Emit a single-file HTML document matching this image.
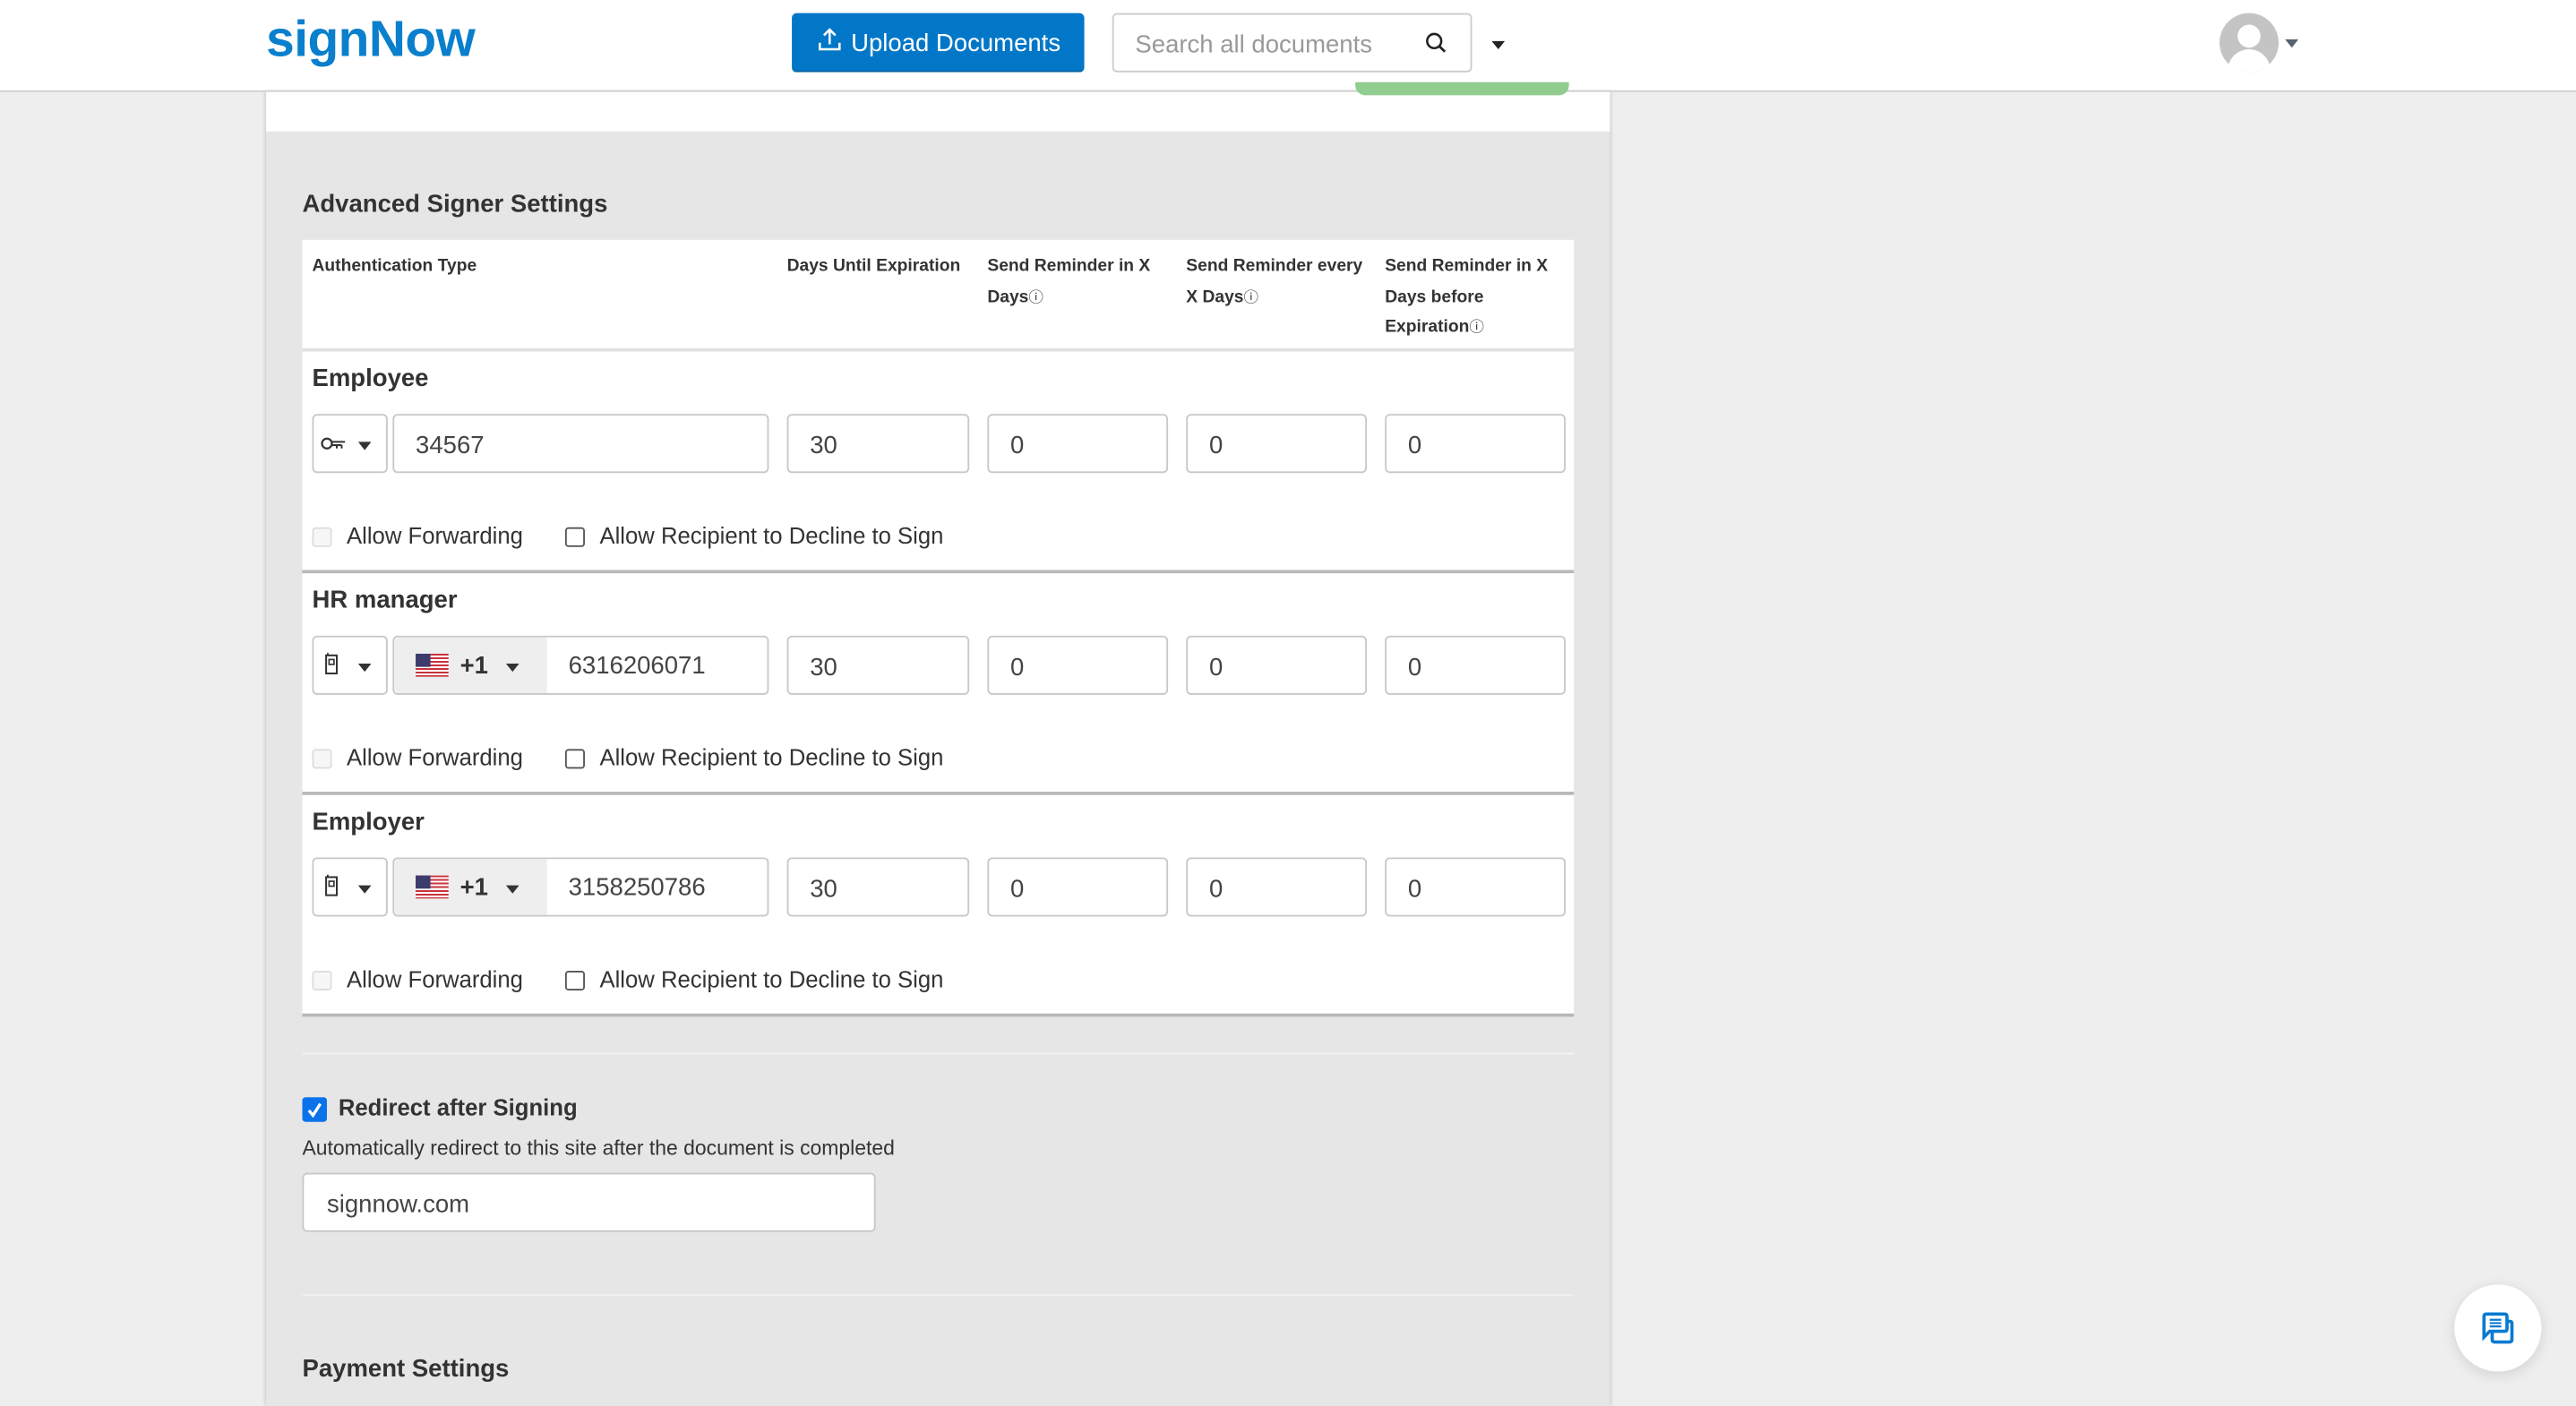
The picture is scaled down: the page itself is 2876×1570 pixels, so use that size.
<!DOCTYPE html>
<html><head><meta charset="utf-8">
<style>
html,body{margin:0;padding:0;width:2876px;height:1570px;overflow:hidden;background:#eeeeee;}
#s{position:absolute;left:0;top:0;width:1568px;height:856px;transform:scale(1.83418);transform-origin:0 0;font-family:"Liberation Sans",sans-serif;color:#333;}
.a{position:absolute;}
.hdr{left:0;top:0;width:1568px;height:55px;background:#fff;border-bottom:1px solid #cfcfcf;}
.panel{left:162px;top:56px;width:818px;height:800px;background:#e6e6e6;box-shadow:1px 0 2px #cfcfcf,-1px 0 2px #cfcfcf;}
.tbl{left:184px;top:146px;width:774px;height:472px;background:#fff;}
.th{font-size:10.5px;font-weight:bold;line-height:18.6px;color:#333;top:153px;}
.lbl{font-size:15px;font-weight:bold;color:#333;}
.inp{border:1px solid #c8c8c8;border-radius:3px;background:#fff;box-sizing:border-box;height:36px;font-size:15px;color:#444;line-height:37px;padding-left:13px;}
.cb{width:12px;height:12px;border-radius:2px;box-sizing:border-box;}
.ck{font-size:14px;color:#333;}
.sep{left:184px;width:774px;height:2px;background:#b8b8b8;}
.car{width:0;height:0;border-left:4px solid transparent;border-right:4px solid transparent;border-top:5px solid #333;}
.flag{width:20px;height:14px;background:repeating-linear-gradient(#c8323c 0 1.1px,#fff 1.1px 2.2px);}
.flag:before{content:"";position:absolute;left:0;top:0;width:9px;height:7.5px;background:#3c3b6e;}
</style></head><body>
<div id="s">
<div class="a hdr"></div>
<div class="a" style="left:162px;top:6px;font-size:31px;font-weight:bold;color:#0a7fcd;letter-spacing:-0.3px;">signNow</div>
<div class="a" style="left:482px;top:8px;width:178px;height:36px;background:#0277c8;border-radius:3px;border-bottom:1px solid #0561a3;box-sizing:border-box;color:#fff;font-size:15px;line-height:37px;padding-left:36px;">Upload Documents</div>
<svg class="a" style="left:497px;top:16px" width="16" height="16" viewBox="0 0 16 16"><path d="M8 11V2M4.5 5.5L8 2l3.5 3.5M2 10v4h12v-4" fill="none" stroke="#fff" stroke-width="1.4"/></svg>
<div class="a" style="left:677px;top:8px;width:219px;height:36px;border:1px solid #ccc;border-radius:3px;box-sizing:border-box;font-size:15px;color:#999;line-height:37px;padding-left:13px;">Search all documents</div>
<svg class="a" style="left:867px;top:19px" width="14" height="14" viewBox="0 0 14 14"><circle cx="6" cy="6" r="4.3" fill="none" stroke="#222" stroke-width="1.4"/><path d="M9 9l3.5 3.5" stroke="#222" stroke-width="1.5"/></svg>
<div class="a car" style="left:908px;top:25px;border-top-color:#222"></div>
<div class="a" style="left:1351px;top:8px;width:36px;height:36px;border-radius:50%;background:#c4c4c4;overflow:hidden;">
<div class="a" style="left:11px;top:7px;width:14px;height:14px;border-radius:50%;background:#fff;"></div>
<div class="a" style="left:5px;top:22px;width:26px;height:26px;border-radius:50%;background:#fff;"></div></div>
<div class="a car" style="left:1391px;top:24px;border-top-color:#56626e"></div>

<div class="a panel"></div>
<div class="a" style="left:162px;top:56px;width:818px;height:24px;background:#fff;"></div>
<div class="a" style="left:825px;top:50px;width:130px;height:8px;background:#90cd8f;border-radius:0 0 6px 6px;"></div>

<div class="a" style="left:184px;top:116px;font-size:15px;font-weight:bold;">Advanced Signer Settings</div>
<div class="a tbl"></div>
<div class="a th" style="left:190px">Authentication Type</div>
<div class="a th" style="left:479px">Days Until Expiration</div>
<div class="a th" style="left:601px;width:110px">Send Reminder in X Days<span style="font-weight:normal;font-size:9px">ⓘ</span></div>
<div class="a th" style="left:722px;width:112px">Send Reminder every X Days<span style="font-weight:normal;font-size:9px">ⓘ</span></div>
<div class="a th" style="left:843px;width:105px">Send Reminder in X Days before Expiration<span style="font-weight:normal;font-size:9px">ⓘ</span></div>
<div class="a" style="left:184px;top:212px;width:774px;height:2px;background:#e2e2e2;"></div>

<div class="a lbl" style="left:190px;top:222px">Employee</div>
<div class="a inp" style="left:190px;top:252px;width:46px;"></div>
<svg class="a" style="left:195px;top:265px" width="16" height="10" viewBox="0 0 16 10"><circle cx="4" cy="5" r="3" fill="none" stroke="#333" stroke-width="1.2"/><path d="M7 4h8M7 6h6M10 6v2M13 6v2" stroke="#333" stroke-width="1.1" fill="none"/></svg>
<div class="a car" style="left:218px;top:269px"></div>
<div class="a inp" style="left:239px;top:252px;width:229px;">34567</div>
<div class="a inp" style="left:479px;top:252px;width:111px;">30</div>
<div class="a inp" style="left:601px;top:252px;width:110px;">0</div>
<div class="a inp" style="left:722px;top:252px;width:110px;">0</div>
<div class="a inp" style="left:843px;top:252px;width:110px;">0</div>
<div class="a cb" style="left:190px;top:321px;border:1px solid #ddd;background:#f7f7f7"></div>
<div class="a ck" style="left:211px;top:318px">Allow Forwarding</div>
<div class="a cb" style="left:344px;top:321px;border:1px solid #555;"></div>
<div class="a ck" style="left:365px;top:318px">Allow Recipient to Decline to Sign</div>
<div class="a sep" style="top:347px"></div>

<div class="a lbl" style="left:190px;top:357px">HR manager</div>
<div class="a inp" style="left:190px;top:387px;width:46px;"></div>
<svg class="a" style="left:197px;top:397px" width="10" height="14" viewBox="0 0 10 14"><rect x="1.5" y="2" width="6.5" height="11" fill="none" stroke="#333" stroke-width="1.1"/><rect x="3.3" y="4.5" width="3" height="3" fill="none" stroke="#333" stroke-width="0.9"/><path d="M2.5 2V0.5" stroke="#333"/></svg>
<div class="a car" style="left:218px;top:404px"></div>
<div class="a inp" style="left:239px;top:387px;width:229px;"></div>
<div class="a" style="left:240px;top:388px;width:93px;height:34px;background:#eeeeee;border-radius:3px 0 0 3px"></div>
<div class="a flag" style="left:253px;top:398px"></div>
<div class="a" style="left:280px;top:397px;font-size:15px;font-weight:bold;color:#333">+1</div>
<div class="a car" style="left:308px;top:404px"></div>
<div class="a" style="left:346px;top:397px;font-size:15px;color:#444">6316206071</div>
<div class="a inp" style="left:479px;top:387px;width:111px;">30</div>
<div class="a inp" style="left:601px;top:387px;width:110px;">0</div>
<div class="a inp" style="left:722px;top:387px;width:110px;">0</div>
<div class="a inp" style="left:843px;top:387px;width:110px;">0</div>
<div class="a cb" style="left:190px;top:456px;border:1px solid #ddd;background:#f7f7f7"></div>
<div class="a ck" style="left:211px;top:453px">Allow Forwarding</div>
<div class="a cb" style="left:344px;top:456px;border:1px solid #555;"></div>
<div class="a ck" style="left:365px;top:453px">Allow Recipient to Decline to Sign</div>
<div class="a sep" style="top:482px"></div>

<div class="a lbl" style="left:190px;top:492px">Employer</div>
<div class="a inp" style="left:190px;top:522px;width:46px;"></div>
<svg class="a" style="left:197px;top:532px" width="10" height="14" viewBox="0 0 10 14"><rect x="1.5" y="2" width="6.5" height="11" fill="none" stroke="#333" stroke-width="1.1"/><rect x="3.3" y="4.5" width="3" height="3" fill="none" stroke="#333" stroke-width="0.9"/><path d="M2.5 2V0.5" stroke="#333"/></svg>
<div class="a car" style="left:218px;top:539px"></div>
<div class="a inp" style="left:239px;top:522px;width:229px;"></div>
<div class="a" style="left:240px;top:523px;width:93px;height:34px;background:#eeeeee;border-radius:3px 0 0 3px"></div>
<div class="a flag" style="left:253px;top:533px"></div>
<div class="a" style="left:280px;top:532px;font-size:15px;font-weight:bold;color:#333">+1</div>
<div class="a car" style="left:308px;top:539px"></div>
<div class="a" style="left:346px;top:532px;font-size:15px;color:#444">3158250786</div>
<div class="a inp" style="left:479px;top:522px;width:111px;">30</div>
<div class="a inp" style="left:601px;top:522px;width:110px;">0</div>
<div class="a inp" style="left:722px;top:522px;width:110px;">0</div>
<div class="a inp" style="left:843px;top:522px;width:110px;">0</div>
<div class="a cb" style="left:190px;top:591px;border:1px solid #ddd;background:#f7f7f7"></div>
<div class="a ck" style="left:211px;top:588px">Allow Forwarding</div>
<div class="a cb" style="left:344px;top:591px;border:1px solid #555;"></div>
<div class="a ck" style="left:365px;top:588px">Allow Recipient to Decline to Sign</div>
<div class="a sep" style="top:617px"></div>

<div class="a" style="left:184px;top:641px;width:774px;height:1px;background:#f2f2f2"></div>
<div class="a" style="left:184px;top:668px;width:15px;height:15px;border-radius:2px;background:#0b73ea;"></div>
<svg class="a" style="left:185px;top:669px" width="13" height="13" viewBox="0 0 13 13"><path d="M3 7l2.5 3L10 3" fill="none" stroke="#fff" stroke-width="1.8"/></svg>
<div class="a" style="left:206px;top:666px;font-size:14px;font-weight:bold;color:#333">Redirect after Signing</div>
<div class="a" style="left:184px;top:692px;font-size:12.5px;color:#333">Automatically redirect to this site after the document is completed</div>
<div class="a inp" style="left:184px;top:714px;width:349px;padding-left:14px;">signnow.com</div>
<div class="a" style="left:184px;top:788px;width:774px;height:1px;background:#f0f0f0"></div>
<div class="a" style="left:184px;top:825px;font-size:15px;font-weight:bold;color:#333">Payment Settings</div>

<div class="a" style="left:1494px;top:782px;width:53px;height:53px;border-radius:50%;background:#fff;box-shadow:0 2px 8px rgba(0,0,0,0.12);"></div>
<svg class="a" style="left:1509px;top:797px" width="24" height="24" viewBox="0 0 24 24"><path d="M3 17V4.5Q3 3 4.5 3h11Q17 3 17 4.5V12Q17 13.5 15.5 13.5H6.5L3 17z" fill="none" stroke="#0a7ad0" stroke-width="2"/><path d="M6.5 6.5h7M6.5 8.5h7M6.5 10.5h7" stroke="#0a7ad0" stroke-width="1.2"/><path d="M17.5 7.5h1.5Q20 7.5 20 9v9.5Q20 20 18.5 20h-9Q8 20 8 18.5V14" fill="none" stroke="#0a7ad0" stroke-width="2"/></svg>
</div>
</body></html>
